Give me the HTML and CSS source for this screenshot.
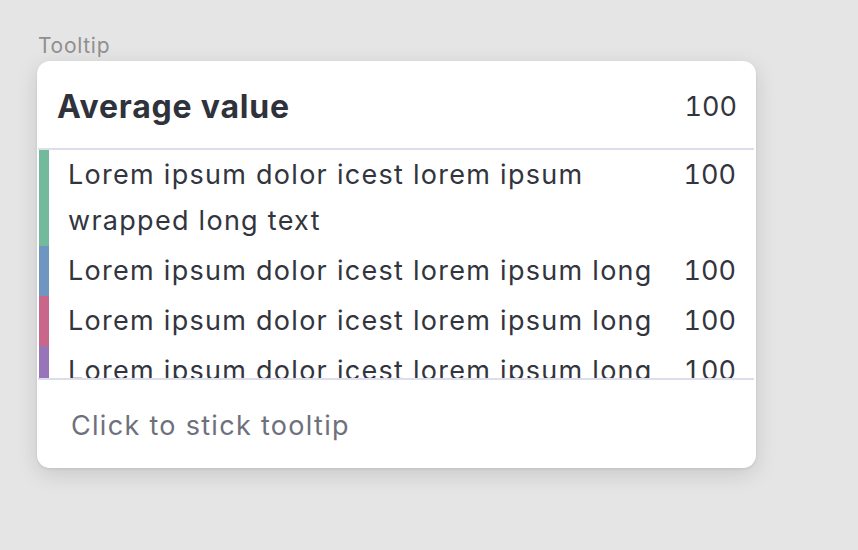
FILE: index.html
```html
<!DOCTYPE html>
<html>
<head>
<meta charset="utf-8">
<link rel="stylesheet" href="styles.css">
</head>
<body>
<div class="stage">
  <div class="label">Tooltip</div>
  <div class="card">
    <div class="header">
      <div class="title">Average value</div>
      <div class="value">100</div>
    </div>
    <div class="list">
      <div class="row">
        <span class="bar green"></span>
        <span class="text">Lorem ipsum dolor icest lorem ipsum wrapped long text</span>
        <span class="value">100</span>
      </div>
      <div class="row">
        <span class="bar blue"></span>
        <span class="text">Lorem ipsum dolor icest lorem ipsum long</span>
        <span class="value">100</span>
      </div>
      <div class="row">
        <span class="bar pink"></span>
        <span class="text">Lorem ipsum dolor icest lorem ipsum long</span>
        <span class="value">100</span>
      </div>
      <div class="row">
        <span class="bar purple"></span>
        <span class="text">Lorem ipsum dolor icest lorem ipsum long</span>
        <span class="value">100</span>
      </div>
    </div>
    <div class="footer">Click to stick tooltip</div>
  </div>
</div>
</body>
</html>
```
FILE: styles.css
```css
html, body {
  margin: 0;
  padding: 0;
}
body {
  background: #e5e5e5;
  font-family: Inter, "Noto Sans", sans-serif;
  color: #33353e;
  width: 858px;
  height: 550px;
  overflow: hidden;
}
.stage {
  padding: 32px 0 0 37px;
}
.label {
  font-size: 21px;
  line-height: 28px;
  letter-spacing: 0.7px;
  color: #8f8f8f;
  margin-left: 1px;
  margin-bottom: 1px;
}
.card {
  width: 719px;
  height: 407px;
  background: #fff;
  border-radius: 13px;
  box-shadow: 0 6px 22px rgba(0, 0, 0, 0.13), 0 1px 3px rgba(0, 0, 0, 0.08);
  display: flex;
  flex-direction: column;
  overflow: hidden;
}
.header {
  height: 84px;
  padding-top: 3px;
  display: flex;
  align-items: center;
  justify-content: space-between;
  border-bottom: 2px solid #dcdfe9;
  margin: 0 2px 0 1px;
  padding-left: 19px;
  padding-right: 17px;
}
.title {
  font-size: 32px;
  font-weight: 700;
  letter-spacing: 0.8px;
  color: #30323b;
}
.value {
  font-size: 27px;
  font-variant-numeric: tabular-nums;
  color: #33353e;
}
.list {
  height: 228px;
  overflow: hidden;
  border-bottom: 2px solid #dcdfe9;
  margin: 0 2px 0 1px;
}
.row {
  display: flex;
  align-items: flex-start;
  padding-right: 18px;
}
.bar {
  width: 10px;
  align-self: stretch;
  margin-left: 1px;
  flex: none;
}
.row .text {
  flex: 1;
  font-size: 27px;
  letter-spacing: 1.28px;
  line-height: 46px;
  padding: 2px 0;
  margin-left: 19px;
  margin-right: 26px;
}
.row .value {
  line-height: 46px;
  padding: 2px 0;
  flex: none;
}
.green { background: #73b99c; }
.blue { background: #6f95c1; }
.pink { background: #c8678a; }
.purple { background: #9874b9; }
.footer {
  flex: 1;
  display: flex;
  align-items: center;
  padding-top: 3px;
  padding-left: 34px;
  font-size: 27px;
  letter-spacing: 1.3px;
  color: #6e717c;
}
```
